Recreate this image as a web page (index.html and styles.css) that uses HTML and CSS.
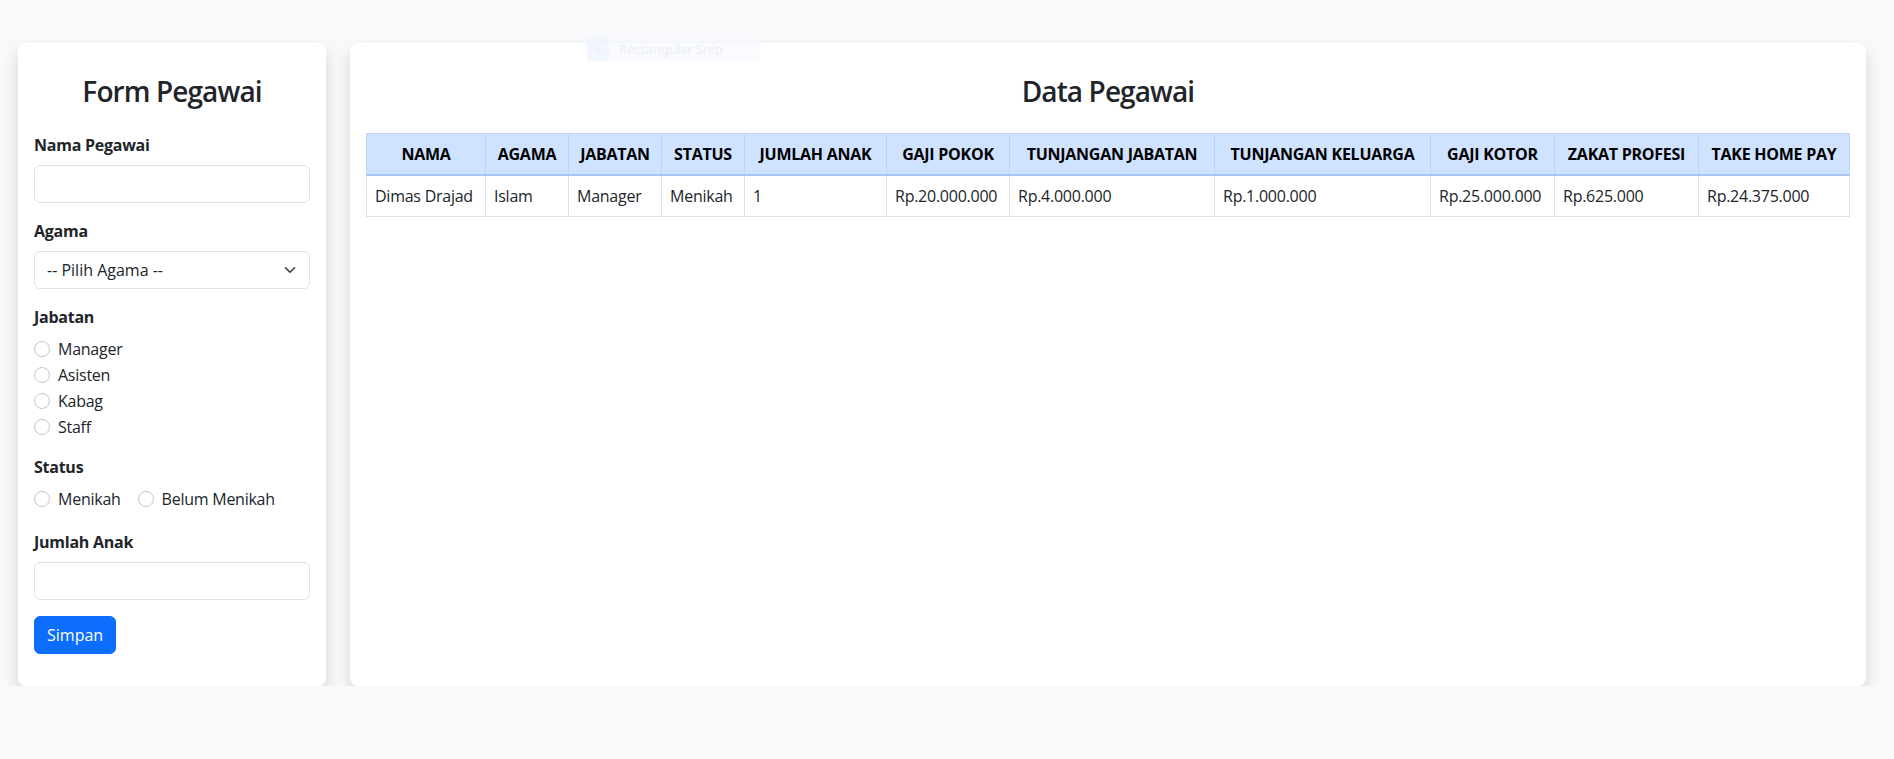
FILE: index.html
```html
<!DOCTYPE html>
<html lang="id">
<head>
<meta charset="utf-8">
<title>Data Pegawai</title>
<link rel="stylesheet" href="styles.css">
</head>
<body>
<div class="snip"><span class="snip-icon"><span class="snip-dot"></span></span><span class="snip-text">Rectangular Snip</span></div>
<main class="page">
  <section class="card card-form">
    <h3 class="card-title">Form Pegawai</h3>
    <form class="form">
      <div class="group">
        <label class="label" for="nama">Nama Pegawai</label>
        <input class="control" id="nama" type="text">
      </div>
      <div class="group">
        <label class="label" for="agama">Agama</label>
        <div class="select-wrap">
          <select class="control select" id="agama">
            <option>-- Pilih Agama --</option>
          </select>
          <svg class="chevron" viewBox="0 0 16 16" width="16" height="12"><path d="M2 5l6 6 6-6" fill="none" stroke="#343a40" stroke-width="2" stroke-linecap="round" stroke-linejoin="round"/></svg>
        </div>
      </div>
      <div class="group">
        <span class="label">Jabatan</span>
        <label class="check"><input type="radio" name="jabatan" class="radio"><span>Manager</span></label>
        <label class="check"><input type="radio" name="jabatan" class="radio"><span>Asisten</span></label>
        <label class="check"><input type="radio" name="jabatan" class="radio"><span>Kabag</span></label>
        <label class="check"><input type="radio" name="jabatan" class="radio"><span>Staff</span></label>
      </div>
      <div class="group group-status">
        <span class="label">Status</span>
        <div class="inline-checks">
          <label class="check check-inline"><input type="radio" name="status" class="radio"><span>Menikah</span></label>
          <label class="check check-inline"><input type="radio" name="status" class="radio"><span>Belum Menikah</span></label>
        </div>
      </div>
      <div class="group">
        <label class="label" for="anak">Jumlah Anak</label>
        <input class="control" id="anak" type="number">
      </div>
      <div class="group">
        <button class="btn" type="button">Simpan</button>
      </div>
    </form>
  </section>
  <section class="card card-data">
    <h3 class="card-title">Data Pegawai</h3>
    <table class="table">
      <colgroup>
        <col class="c-nama"><col class="c-agama"><col class="c-jabatan"><col class="c-status"><col class="c-anak"><col class="c-pokok"><col class="c-tjab"><col class="c-tkel"><col class="c-kotor"><col class="c-zakat"><col class="c-thp">
      </colgroup>
      <thead>
        <tr>
          <th>Nama</th><th>Agama</th><th>Jabatan</th><th>Status</th><th>Jumlah Anak</th><th>Gaji Pokok</th><th>Tunjangan Jabatan</th><th>Tunjangan Keluarga</th><th>Gaji Kotor</th><th>Zakat Profesi</th><th>Take Home Pay</th>
        </tr>
      </thead>
      <tbody>
        <tr>
          <td>Dimas Drajad</td><td>Islam</td><td>Manager</td><td>Menikah</td><td>1</td><td>Rp.20.000.000</td><td>Rp.4.000.000</td><td>Rp.1.000.000</td><td>Rp.25.000.000</td><td>Rp.625.000</td><td>Rp.24.375.000</td>
        </tr>
      </tbody>
    </table>
  </section>
</main>
</body>
</html>
```

FILE: styles.css
```css
* { box-sizing: border-box; }

body {
  margin: 0;
  background: #f8f9fa;
  color: #212529;
  font-family: "Open Sans", "Noto Sans", sans-serif;
  font-size: 16px;
  line-height: 1.5;
  letter-spacing: -0.25px;
}

.page {
  display: flex;
  gap: 24px;
  padding: 43px 28px 0 18px;
}

.card {
  background: #fff;
  border-radius: 8px;
  box-shadow: 0 8px 16px rgba(0, 0, 0, 0.15);
  padding: 16px;
}

.card-form { width: 308px; flex: none; }
.card-data { flex: 1; min-width: 0; }

.card-title {
  margin: 16px 0 24px;
  font-size: 28px;
  font-weight: 600;
  letter-spacing: -0.9px;
  line-height: 1.2;
  text-align: center;
  color: #212529;
}

.form { display: block; }

.group { margin-bottom: 16px; }
.group-status { margin-bottom: 19px; }

.label {
  display: block;
  margin-bottom: 8px;
  font-weight: 700;
}

.control {
  display: block;
  width: 100%;
  height: 38px;
  padding: 6px 12px;
  font: inherit;
  color: #212529;
  background: #fff;
  border: 1px solid #dee2e6;
  border-radius: 6px;
  appearance: none;
  -webkit-appearance: none;
}

.select-wrap { position: relative; }
.select { padding-right: 36px; }
.chevron {
  position: absolute;
  right: 12px;
  top: 13px;
  pointer-events: none;
}

.check {
  display: flex;
  align-items: flex-start;
  min-height: 24px;
  margin-bottom: 2px;
  gap: 8px;
}

.radio {
  appearance: none;
  -webkit-appearance: none;
  width: 16px;
  height: 16px;
  margin: 4px 0 0;
  flex: none;
  border: 1px solid #c4c6c8;
  border-radius: 50%;
  background: #fff;
}

.inline-checks { display: flex; }
.check-inline { margin-right: 17px; margin-bottom: 0; }

.btn {
  height: 38px;
  padding: 6px 12px;
  font: inherit;
  color: #fff;
  background: #0d6efd;
  border: 1px solid #0d6efd;
  border-radius: 6px;
}

.table {
  width: 100%;
  table-layout: fixed;
  border-collapse: collapse;
}

.table th,
.table td {
  padding: 8px;
  white-space: nowrap;
  overflow: hidden;
}

.table th {
  background: #cfe2ff;
  color: #000;
  font-weight: 700;
  text-transform: uppercase;
  text-align: center;
  border: 1px solid #bcd3f5;
  border-bottom: 2px solid #a9c6f2;
}

.table td {
  text-align: left;
  border: 1px solid #dee2e6;
  color: #212529;
}

.c-nama { width: 119px; }
.c-agama { width: 83px; }
.c-jabatan { width: 93px; }
.c-status { width: 83px; }
.c-anak { width: 142px; }
.c-pokok { width: 123px; }
.c-tjab { width: 205px; }
.c-tkel { width: 216px; }
.c-kotor { width: 124px; }
.c-zakat { width: 144px; }
.c-thp { width: 151px; }

.snip {
  position: absolute;
  left: 587px;
  top: 39px;
  width: 173px;
  height: 22px;
  display: flex;
  align-items: center;
  background: rgba(244, 248, 255, 0.55);
  z-index: 5;
}

.snip-icon {
  width: 22px;
  height: 22px;
  display: flex;
  align-items: center;
  justify-content: center;
  background: rgba(235, 243, 255, 0.6);
}

.snip-dot {
  width: 6px;
  height: 6px;
  border-radius: 50%;
  background: #f0f2f6;
}

.snip-text {
  margin-left: 10px;
  font-family: "Noto Sans", sans-serif;
  font-size: 13px;
  letter-spacing: 0;
  color: #eceef2;
}
```
